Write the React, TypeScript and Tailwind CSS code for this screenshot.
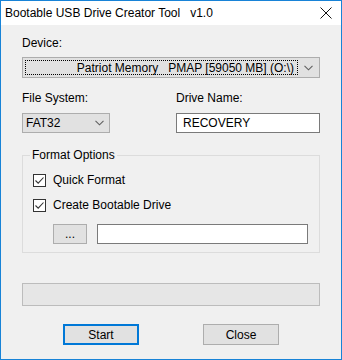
import React from "react";

const font = { fontFamily: '"Segoe UI", "Liberation Sans", Arial, sans-serif' };

function Chevron() {
  return (
    <svg width="9" height="6" viewBox="0 0 9 6" className="shrink-0">
      <path d="M0.5 0.8 L4.5 4.8 L8.5 0.8" fill="none" stroke="#5f5f5f" strokeWidth="1.1" />
    </svg>
  );
}

function Check({ label }: { label: string }) {
  return (
    <div className="flex items-center h-4 gap-[7px]">
      <div className="w-[13px] h-[13px] border border-[#333333] bg-white flex items-center justify-center">
        <svg width="11" height="11" viewBox="0 0 11 11">
          <path d="M1.5 5.5 L4.2 8.2 L9.5 2.5" fill="none" stroke="#333333" strokeWidth="1.1" />
        </svg>
      </div>
      <span>{label}</span>
    </div>
  );
}

export default function App() {
  return (
    <div
      className="w-[342px] h-[360px] border border-[#1883d7] flex flex-col text-[12px] text-black bg-[#f0f0f0]"
      style={font}
    >
      <div className="h-[24px] bg-white flex items-center justify-between pl-[4px] pr-[9px]">
        <span className="whitespace-pre">Bootable USB Drive Creator Tool   v1.0</span>
        <svg width="12" height="12" viewBox="0 0 12 12">
          <path d="M0.5 0.5 L11.5 11.5 M11.5 0.5 L0.5 11.5" stroke="#111" strokeWidth="1" />
        </svg>
      </div>

      <div className="flex flex-col px-[21px]">
        <div className="mt-[10px] h-4 leading-4">Device:</div>
        <div className="mt-[6px] h-[21px] border border-[#adadad] bg-[#e1e1e1] flex items-center pl-[2px] pr-[6px]">
          <div className="flex-1 h-[15px] border border-dotted border-black flex items-center justify-end pr-[3px] whitespace-pre">
            Patriot Memory   PMAP [59050 MB] (O:\)
          </div>
          <div className="ml-[6px]">
            <Chevron />
          </div>
        </div>

        <div className="mt-[12px] flex">
          <div className="flex flex-col w-[154px]">
            <div className="h-4 leading-4">File System:</div>
            <div className="mt-[7px] w-[88px] h-[20px] border border-[#adadad] bg-[#e1e1e1] flex items-center justify-between pl-[3px] pr-[5px]">
              <span>FAT32</span>
              <Chevron />
            </div>
          </div>
          <div className="flex flex-col flex-1">
            <div className="h-4 leading-4">Drive Name:</div>
            <div className="mt-[7px] h-[20px] border border-[#7a7a7a] bg-white flex items-center pl-[6px]">
              RECOVERY
            </div>
          </div>
        </div>

        <fieldset className="mt-[14px] border border-[#dcdcdc] px-[10px] pb-[8px] pt-[9px]">
          <legend className="-ml-[3px] px-[2px] h-4 leading-4">Format Options</legend>
          <Check label="Quick Format" />
          <div className="mt-[9px]">
            <Check label="Create Bootable Drive" />
          </div>
          <div className="mt-[11px] flex items-center pl-[20px] gap-[10px]">
            <div className="w-[34px] h-[20px] border border-[#adadad] bg-[#e1e1e1] flex items-center justify-center leading-none pb-[1px]">
              ...
            </div>
            <div className="w-[211px] h-[20px] border border-[#7a7a7a] bg-white" />
          </div>
        </fieldset>

        <div className="mt-[30px] h-[23px] border border-[#bcbcbc] bg-[#e6e6e6]" />

        <div className="mt-[18px] flex pl-[41px] gap-[64px]">
          <div className="w-[76px] h-[21px] border-2 border-[#0078d7] bg-[#e1e1e1] flex items-center justify-center">
            Start
          </div>
          <div className="w-[76px] h-[21px] border border-[#adadad] bg-[#e1e1e1] flex items-center justify-center">
            Close
          </div>
        </div>
      </div>
    </div>
  );
}
